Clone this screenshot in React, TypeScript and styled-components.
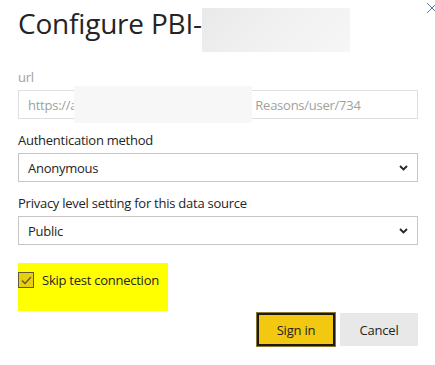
import React from "react";
import styled, { createGlobalStyle } from "styled-components";

const Global = createGlobalStyle`
  html, body { margin: 0; padding: 0; background: #ffffff; overflow: hidden; }
  body { font-family: "Open Sans", "Noto Sans", sans-serif; color: #252423; }
`;

const Dialog = styled.div`
  position: relative;
  width: 435px;
  height: 365px;
  padding: 0 17px 0 18px;
  box-sizing: border-box;
  display: flex;
  flex-direction: column;
`;

const TitleRow = styled.div`
  display: flex;
  align-items: flex-start;
  height: 46px;
`;

const Title = styled.h1`
  margin: 0;
  font-weight: 400;
  font-size: 28px;
  line-height: 46px;
  color: #252423;
  letter-spacing: -0.2px;
  white-space: nowrap;
`;

const Redaction = styled.span<{ $w: number; $h: number }>`
  display: inline-block;
  width: ${(p) => p.$w}px;
  height: ${(p) => p.$h}px;
  background: linear-gradient(135deg, #e9e9e9 0%, #f1f1f1 50%, #f6f6f6 100%);
`;

const TitleRedaction = styled(Redaction)`
  margin-top: 8px;
`;

const Close = styled.button`
  position: absolute;
  top: 2px;
  left: 426px;
  width: 12px;
  height: 12px;
  padding: 0;
  border: 0;
  background: none;
`;

const Form = styled.div`
  display: flex;
  flex-direction: column;
  gap: 12px;
  margin-top: 22px;
`;

const Field = styled.div`
  display: flex;
  flex-direction: column;
  gap: 4px;
`;

const Label = styled.label<{ $disabled?: boolean }>`
  font-size: 13px;
  line-height: 18px;
  letter-spacing: -0.25px;
  color: ${(p) => (p.$disabled ? "#a19f9d" : "#252423")};
`;

const InputWrap = styled.div`
  position: relative;
`;

const TextBox = styled.div`
  height: 29px;
  box-sizing: border-box;
  border: 1px solid #e1dfdd;
  padding: 0 9px;
  display: flex;
  align-items: center;
  font-size: 13px;
  letter-spacing: -0.25px;
  color: #a19f9d;
  white-space: nowrap;
  overflow: hidden;
`;

const Gap = styled.span`
  display: inline-block;
  width: 178px;
`;

const UrlRedaction = styled(Redaction)`
  position: absolute;
  left: 56px;
  top: -4px;
  background: #f7f7f7;
`;

const Select = styled.div`
  height: 29px;
  box-sizing: border-box;
  border: 1px solid #c8c6c4;
  padding: 0 9px;
  display: flex;
  align-items: center;
  justify-content: space-between;
  font-size: 13px;
  letter-spacing: -0.25px;
  color: #252423;
`;

const Highlight = styled.div`
  margin-top: 18px;
  width: 150px;
  height: 48px;
  background: #ffff00;
  box-sizing: border-box;
  padding-top: 9px;
`;

const CheckRow = styled.div`
  display: flex;
  align-items: center;
  gap: 8px;
  font-size: 13px;
  line-height: 16px;
  letter-spacing: -0.25px;
  color: #252423;
  white-space: nowrap;
`;

const CheckBox = styled.span`
  width: 16px;
  height: 16px;
  box-sizing: border-box;
  border: 1.5px solid #5c5a3a;
  background: #e8cf0a;
  display: flex;
  align-items: center;
  justify-content: center;
`;

const Buttons = styled.div`
  display: flex;
  justify-content: flex-end;
  gap: 5px;
  margin-top: 2px;
`;

const Button = styled.button<{ $primary?: boolean }>`
  width: 78px;
  height: 33px;
  box-sizing: border-box;
  font-family: inherit;
  font-size: 13px;
  letter-spacing: -0.2px;
  color: #252423;
  background: ${(p) => (p.$primary ? "#f2c811" : "#e8e8e8")};
  border: ${(p) => (p.$primary ? "2px solid #1b1a19" : "0")};
  box-shadow: ${(p) => (p.$primary ? "0 0 0 1px #8a7a30" : "none")};
  padding: 0;
`;

const Chevron = () => (
  <svg width="9" height="6" viewBox="0 0 9 6">
    <path d="M1 1 L4.5 4.5 L8 1" fill="none" stroke="#252423" strokeWidth="1.8" />
  </svg>
);

export default function App() {
  return (
    <>
      <Global />
      <Dialog>
        <TitleRow>
          <Title>Configure PBI-</Title>
          <TitleRedaction $w={148} $h={44} />
        </TitleRow>
        <Close aria-label="Close">
          <svg width="12" height="12" viewBox="0 0 12 12">
            <path d="M1 1 L11 11 M11 1 L1 11" stroke="#5b7fa6" strokeWidth="1" />
          </svg>
        </Close>
        <Form>
          <Field>
            <Label $disabled>url</Label>
            <InputWrap>
              <TextBox>
                https://a<Gap />Reasons/user/734
              </TextBox>
              <UrlRedaction $w={178} $h={37} />
            </InputWrap>
          </Field>
          <Field>
            <Label>Authentication method</Label>
            <Select>
              <span>Anonymous</span>
              <Chevron />
            </Select>
          </Field>
          <Field>
            <Label>Privacy level setting for this data source</Label>
            <Select>
              <span>Public</span>
              <Chevron />
            </Select>
          </Field>
        </Form>
        <Highlight>
          <CheckRow>
            <CheckBox>
              <svg width="11" height="9" viewBox="0 0 11 9">
                <path d="M1 4.5 L4 7.5 L10 1" fill="none" stroke="#5c5a3a" strokeWidth="1.3" />
              </svg>
            </CheckBox>
            <span>Skip test connection</span>
          </CheckRow>
        </Highlight>
        <Buttons>
          <Button $primary>Sign in</Button>
          <Button>Cancel</Button>
        </Buttons>
      </Dialog>
    </>
  );
}
